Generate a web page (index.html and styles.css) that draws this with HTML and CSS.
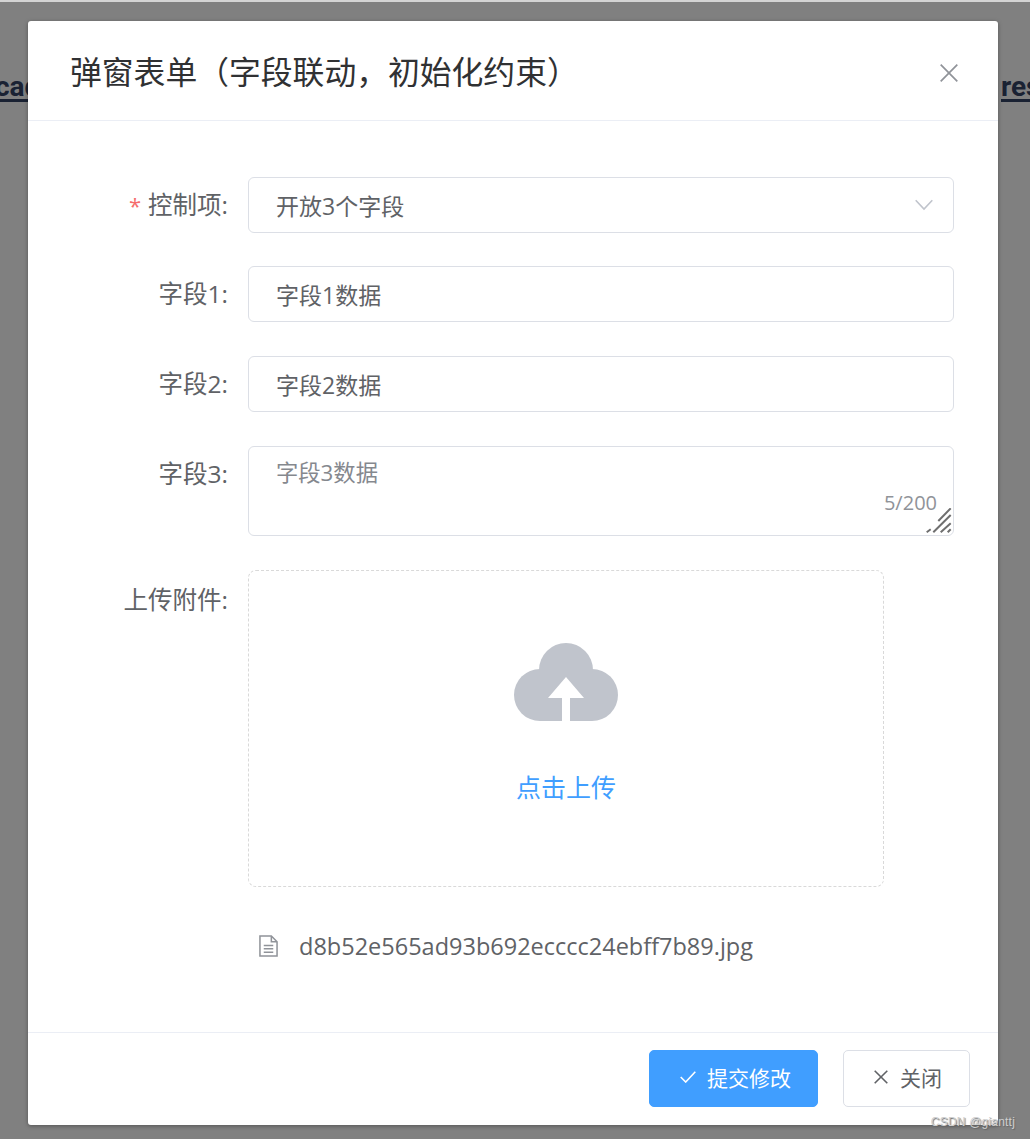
FILE: index.html
```html
<!DOCTYPE html>
<html lang="zh">
<head>
<meta charset="utf-8">
<title>弹窗表单</title>
<link rel="stylesheet" href="styles.css">
</head>
<body>
<div class="top-strip"></div>
<span class="bg-word bg-left">cad</span>
<span class="bg-word bg-right">res</span>
<div class="dialog">
  <header class="dialog-header">
    <h2 class="dialog-title">弹窗表单（字段联动，初始化约束）</h2>
    <svg class="close-icon" viewBox="0 0 18 18"><path d="M.7.7l16.6 16.6M17.3.7L.7 17.3"/></svg>
  </header>
  <main class="dialog-body">
    <div class="form-row">
      <label class="form-label"><span class="required">*</span>控制项:</label>
      <div class="field select">
        <span>开放3个字段</span>
        <svg class="chevron" viewBox="0 0 18 12"><path d="M.7 1.2L9 10l8.3-8.8"/></svg>
      </div>
    </div>
    <div class="form-row">
      <label class="form-label">字段1:</label>
      <div class="field"><span>字段1数据</span></div>
    </div>
    <div class="form-row">
      <label class="form-label">字段2:</label>
      <div class="field"><span>字段2数据</span></div>
    </div>
    <div class="form-row">
      <label class="form-label">字段3:</label>
      <div class="field textarea">
        <span class="textarea-text">字段3数据</span>
        <span class="counter">5/200</span>
        <svg class="resize-grip" viewBox="0 0 27 27"><path d="M24.700.3L12.300 13M24.700 7L7.300 24.300M24.700 15.300L14.700 24.300M24.700 21.300L21.700 24.300M4.700 21.300L.7 24.300"/></svg>
      </div>
    </div>
    <div class="form-row upload-row">
      <label class="form-label">上传附件:</label>
      <div class="upload-column">
        <div class="upload-box">
          <svg class="cloud" viewBox="0 0 104 78">
            <circle cx="26" cy="52" r="26"/><circle cx="78" cy="52" r="26"/><circle cx="52" cy="27" r="27"/>
            <rect x="26" y="26" width="52" height="52"/>
            <path class="cloud-arrow" d="M52 34L70 55H56V78H48V55H34Z"/>
          </svg>
          <span class="upload-text">点击上传</span>
        </div>
        <div class="file-item">
          <svg class="file-icon" viewBox="0 0 20 23"><path d="M1 1h12l6 6v15H1zM13 1v6h6M5 11h10M5 14.500h10M5 18h10"/></svg>
          <span>d8b52e565ad93b692ecccc24ebff7b89.jpg</span>
        </div>
      </div>
    </div>
  </main>
  <footer class="dialog-footer">
    <button class="btn btn-primary" type="button">
      <svg class="btn-icon" viewBox="0 0 16 12"><path d="M.7 6l5 5L15.300.8"/></svg>提交修改
    </button>
    <button class="btn btn-plain" type="button">
      <svg class="btn-icon btn-icon-x" viewBox="0 0 14 14"><path d="M.7.7l12.600 12.600M13.300.7L.7 13.300"/></svg>关闭
    </button>
  </footer>
</div>
<span class="watermark">CSDN @gianttj</span>
</body>
</html>
```
FILE: styles.css
```css
* { box-sizing: border-box; }
html, body { margin: 0; padding: 0; }
body {
  position: relative;
  width: 1030px;
  height: 1139px;
  overflow: hidden;
  background: #808080;
  font-family: "Open Sans", "Noto Sans CJK SC", sans-serif;
  color: #606266;
}
.top-strip { height: 2px; background: #d4d4d4; }
.bg-word {
  position: absolute;
  top: 68px;
  font-family: Roboto, sans-serif;
  font-size: 28px;
  line-height: 38px;
  font-weight: 700;
  color: #1a2233;
  text-decoration: underline;
  text-decoration-thickness: 3px;
  text-underline-offset: 3px;
}
.bg-left { left: -5px; }
.bg-right { left: 1001px; }
.dialog {
  position: relative;
  display: flex;
  flex-direction: column;
  width: 970px;
  height: 1104px;
  margin: 19px 0 0 28px;
  background: #fff;
  border-radius: 3px;
  box-shadow: 0 1px 4px rgba(0, 0, 0, .35);
}
.dialog-header {
  display: flex;
  align-items: center;
  justify-content: space-between;
  height: 100px;
  padding: 4px 40px 0 42px;
  border-bottom: 1px solid #ebeef5;
}
.dialog-title {
  margin: -2px 0 0;
  font-size: 31.800px;
  font-weight: 400;
  line-height: 42px;
  color: #303133;
}
.close-icon { width: 18px; height: 18px; fill: none; stroke: #909399; stroke-width: 1.700; }
.dialog-body {
  flex: 1;
  display: flex;
  flex-direction: column;
  gap: 33.600px;
  padding: 55.800px 44px 0 0;
}
.form-row { display: flex; }
.form-label {
  flex: none;
  width: 200px;
  height: 56px;
  margin-right: 20px;
  font-size: 24.500px;
  line-height: 56px;
  text-align: right;
  white-space: nowrap;
}
.required { color: #f56c6c; margin-right: 7px; font-size: 22px; }
.field {
  position: relative;
  display: flex;
  align-items: center;
  justify-content: space-between;
  flex: 1;
  height: 56px;
  padding: 0 20px 0 27px;
  border: 1px solid #dcdfe6;
  border-radius: 6px;
  font-size: 23px;
}
.chevron { width: 18px; height: 12px; fill: none; stroke: #c0c4cc; stroke-width: 1.600; }
.textarea { height: 90.400px; align-items: flex-start; }
.textarea-text { font-size: 22.300px; line-height: 51px; color: #85888e; }
.counter {
  position: absolute;
  right: 16px;
  bottom: 19px;
  font-size: 20px;
  line-height: 26px;
  color: #909399;
}
.resize-grip {
  position: absolute;
  right: 0;
  bottom: 0;
  width: 27px;
  height: 27px;
  fill: none;
  stroke: #6f6f6f;
  stroke-width: 2;
}
.upload-row { align-items: flex-start; }
.upload-row .form-label { padding-top: 2px; }
.upload-column { flex: 1; }
.upload-box {
  display: flex;
  flex-direction: column;
  align-items: center;
  width: 636px;
  height: 317px;
  padding-top: 72px;
  border: 1px dashed #d9d9d9;
  border-radius: 8px;
}
.cloud { width: 104px; height: 78px; fill: #c0c4cc; }
.cloud-arrow { fill: #fff; }
.upload-text { margin-top: 49px; font-size: 25px; line-height: 34px; color: #409eff; }
.file-item {
  display: flex;
  align-items: center;
  gap: 21px;
  height: 40px;
  margin-top: 39px;
  padding-left: 11px;
  font-size: 23.500px;
  white-space: nowrap;
}
.file-icon { width: 19px; height: 22px; fill: none; stroke: #909399; stroke-width: 1.600; }
.dialog-footer {
  display: flex;
  justify-content: flex-end;
  gap: 25px;
  height: 93px;
  padding: 17px 28px 0 0;
  border-top: 1px solid #ebeef5;
}
.btn {
  display: flex;
  align-items: center;
  justify-content: center;
  gap: 11px;
  height: 57px;
  padding: 0 0 3px 4px;
  border-radius: 5px;
  font: inherit;
  font-size: 21px;
}
.btn-primary { width: 169px; background: #409eff; border: 1px solid #409eff; color: #fff; }
.btn-plain { width: 127px; padding-left: 3px; gap: 12px; background: #fff; border: 1px solid #dcdfe6; color: #606266; }
.btn-icon { width: 16px; height: 12px; fill: none; stroke: #fff; stroke-width: 1.600; }
.btn-icon-x { width: 14px; height: 14px; stroke: #606266; }
.watermark {
  position: absolute;
  right: 15px;
  top: 1114px;
  font-family: "Liberation Sans", sans-serif;
  font-size: 12px;
  letter-spacing: .2px;
  line-height: 16px;
  color: #cfcfcf;
  text-shadow: 1px 1px 1px #666;
}
```
